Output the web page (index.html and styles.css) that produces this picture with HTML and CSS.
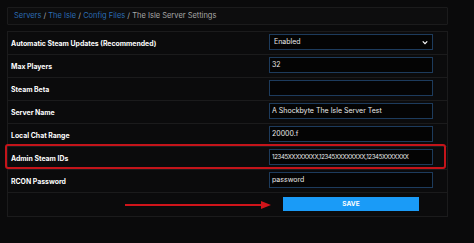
FILE: index.html
```html
<!DOCTYPE html>
<html>
<head>
<meta charset="utf-8">
<link rel="stylesheet" href="styles.css">
</head>
<body>
<div class="page">
  <nav class="crumbs">
    <a>Servers</a> <span class="sep">/</span> <a>The Isle</a> <span class="sep">/</span> <a>Config Files</a> <span class="sep">/</span> <span class="cur">The Isle Server Settings</span>
  </nav>
  <div class="card">
    <div class="row">
      <div class="label">Automatic Steam Updates (Recommended)</div>
      <div class="field select">Enabled<svg class="chev" viewBox="0 0 8 6" width="6" height="5"><path d="M1 1.5 L4 4.5 L7 1.5" fill="none" stroke="#fff" stroke-width="1.6"/></svg></div>
    </div>
    <div class="row">
      <div class="label">Max Players</div>
      <div class="field">32</div>
    </div>
    <div class="row">
      <div class="label">Steam Beta</div>
      <div class="field"></div>
    </div>
    <div class="row">
      <div class="label">Server Name</div>
      <div class="field">A Shockbyte The Isle Server Test</div>
    </div>
    <div class="row">
      <div class="label">Local Chat Range</div>
      <div class="field">20000.f</div>
    </div>
    <div class="row highlight">
      <div class="label">Admin Steam IDs</div>
      <div class="field ids">12345XXXXXXXX,12345XXXXXXXX,12345XXXXXXX</div>
      <div class="redbox"></div>
    </div>
    <div class="row">
      <div class="label">RCON Password</div>
      <div class="field">password</div>
    </div>
    <div class="row last">
      <div class="arrow"><span class="shaft"></span><span class="head"></span></div>
      <button class="save">SAVE</button>
    </div>
  </div>
</div>
</body>
</html>
```
FILE: styles.css
```css
html, body {
  margin: 0;
  padding: 0;
  background: #0a0a0b;
}
body {
  width: 474px;
  height: 243px;
  overflow: hidden;
  font-family: "Inter", "DejaVu Sans", sans-serif;
  color: #fff;
}
.page {
  padding: 7px 26px 0 7px;
  display: flex;
  flex-direction: column;
  gap: 6px;
}
.crumbs {
  height: 18px;
  box-sizing: border-box;
  border: 1px solid #1b1b1c;
  background: #0d0d0e;
  border-radius: 1px;
  padding-left: 6px;
  font-size: 7.5px;
  line-height: 16px;
  color: #a8a8a8;
  white-space: nowrap;
}
.crumbs a { color: #2b6cb3; }
.crumbs .sep { color: #a8a8a8; }
.card {
  border: 1px solid #1b1b1c;
  background: #0b0b0c;
  display: flex;
  flex-direction: column;
}
.row {
  position: relative;
  height: 23px;
  box-sizing: border-box;
  border-bottom: 1px solid #1b1b1c;
  display: flex;
  align-items: center;
  padding-left: 3px;
}
.row.last { border-bottom: none; height: 23px; }
.label {
  width: 258px;
  font-weight: 700;
  font-size: 6.9px;
}
.field {
  width: 164px;
  height: 16px;
  box-sizing: border-box;
  border: 1px solid #1d3b5c;
  background: #040404;
  font-size: 7px;
  line-height: 14px;
  padding-left: 2px;
  color: #e8e8e8;
  display: flex;
  align-items: center;
  margin-top: -2px;
  white-space: nowrap;
  overflow: hidden;
}
.field.ids { font-size: 6px; letter-spacing: -0.3px; }
.field.select { padding-left: 4px; justify-content: space-between; padding-right: 4px; }
.chev { display: block; }
.redbox {
  position: absolute;
  left: -3px;
  top: -3px;
  width: 441px;
  height: 25px;
  box-sizing: border-box;
  border: 2px solid #c4141a;
  border-radius: 3px;
}
.save {
  margin-left: 272px;
  width: 136px;
  height: 14px;
  border: none;
  background: #1a9bf7;
  color: #fff;
  font-family: inherit;
  font-weight: 700;
  font-size: 6.5px;
  padding: 0;
  margin-top: -1px;
}
.arrow {
  position: absolute;
  left: 117px;
  top: 8px;
  display: flex;
  align-items: center;
}
.shaft {
  display: block;
  width: 136px;
  height: 2px;
  background: #d0141a;
}
.head {
  display: block;
  width: 0;
  height: 0;
  border-top: 4px solid transparent;
  border-bottom: 4px solid transparent;
  border-left: 10px solid #d0141a;
}
```
